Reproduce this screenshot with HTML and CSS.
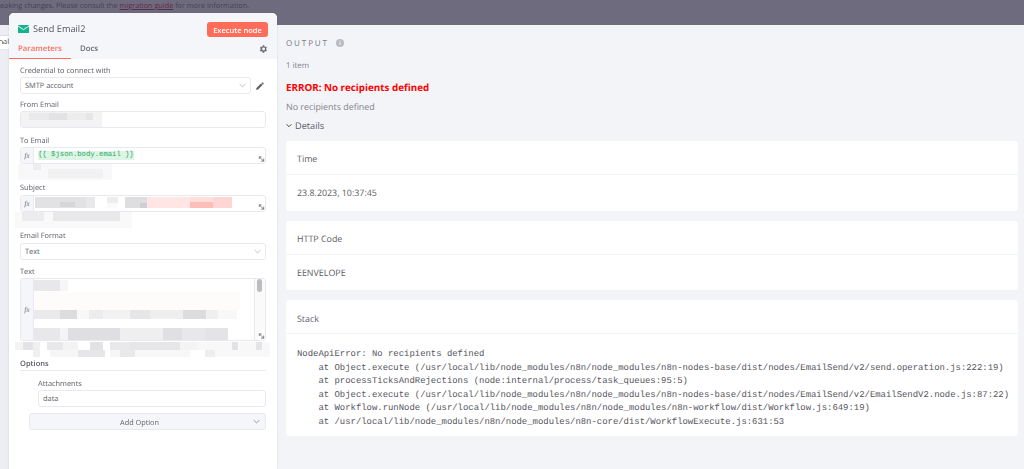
FILE: index.html
```html
<!DOCTYPE html>
<html lang="en">
<head>
<meta charset="utf-8">
<title>Send Email2</title>
<link rel="stylesheet" href="styles.css">
</head>
<body>
<div class="banner"><span class="banner-text">eaking changes. Please consult the <u class="banner-link">migration guide</u> for more information.</span></div>
<div class="stage">
  <div class="gutter"><span class="gutter-field">nal</span></div>
  <section class="panel">
    <header class="panel-head">
      <div class="title">
        <svg class="mail" viewBox="0 0 11 8" width="11" height="8"><rect width="11" height="8" rx=".6" fill="#17b28a"/><path d="M0 1l5.500 3.600L11 1" fill="none" stroke="#fff" stroke-width=".9"/></svg>
        <span>Send Email2</span>
      </div>
      <button class="exec">Execute node</button>
    </header>
    <nav class="tabs">
      <span class="tab tab-active">Parameters</span>
      <span class="tab">Docs</span>
      <svg class="gear" viewBox="0 0 24 24" width="10" height="10"><path fill="#6b6b74" d="M19.400 13a7.500 7.500 0 0 0 0-2l2.100-1.600-2-3.500-2.500 1a7.500 7.500 0 0 0-1.700-1L15.400 3.200h-4l-.4 2.700a7.500 7.500 0 0 0-1.700 1l-2.500-1-2 3.500L6.400 11a7.500 7.500 0 0 0 0 2l-2.100 1.600 2 3.500 2.500-1a7.500 7.500 0 0 0 1.700 1l.4 2.700h4l.4-2.700a7.500 7.500 0 0 0 1.700-1l2.500 1 2-3.500zM13.400 15.500a3.500 3.500 0 1 1 0-7 3.500 3.500 0 0 1 0 7z"/></svg>
    </nav>
    <div class="form">
      <label class="lbl">Credential to connect with</label>
      <div class="cred-row">
        <div class="input select grow">SMTP account<svg class="chev" viewBox="0 0 10 6" width="7" height="5"><path d="M1 1l4 4 4-4" fill="none" stroke="#a5a5ad" stroke-width="1"/></svg></div>
        <svg class="pencil" viewBox="0 0 24 24" width="10" height="10"><path fill="#5f5f68" d="M3 17.300V21h3.700L18 9.700 14.300 6zM20.700 7a1 1 0 0 0 0-1.400l-2.300-2.300a1 1 0 0 0-1.400 0l-1.700 1.700L19 8.700z"/></svg>
      </div>
      <label class="lbl">From Email</label>
      <div class="input masked"><i class="smear smear-from"></i></div>
      <label class="lbl lbl-to">To Email</label>
      <div class="input expr">
        <span class="fx">fx</span><span class="code"><span class="code-hl">{{ $json.body.email }}</span></span>
        <svg class="resize" viewBox="0 0 8 8" width="7" height="8"><path d="M1.500 1.500l5 5M6.500 3.500v3h-3M1.500 4V1.500H4" fill="none" stroke="#555" stroke-width=".8"/></svg>
      </div>
      <div class="under smear-to"></div>
      <label class="lbl lbl-subject">Subject</label>
      <div class="input expr">
        <span class="fx">fx</span><span class="code code-sub"><i class="smear smear-subject"></i></span>
        <svg class="resize" viewBox="0 0 8 8" width="7" height="8"><path d="M1.500 1.500l5 5M6.500 3.500v3h-3M1.500 4V1.500H4" fill="none" stroke="#555" stroke-width=".8"/></svg>
      </div>
      <div class="under smear-sub2"></div>
      <label class="lbl lbl-format">Email Format</label>
      <div class="input select">Text<svg class="chev" viewBox="0 0 10 6" width="7" height="5"><path d="M1 1l4 4 4-4" fill="none" stroke="#a5a5ad" stroke-width="1"/></svg></div>
      <label class="lbl lbl-text">Text</label>
      <div class="input expr expr-tall">
        <span class="fx">fx</span><span class="code-tall smear-text"></span>
        <div class="scroll"><i class="thumb"></i></div>
        <svg class="resize" viewBox="0 0 8 8" width="7" height="8"><path d="M1.500 1.500l5 5M6.500 3.500v3h-3M1.500 4V1.500H4" fill="none" stroke="#555" stroke-width=".8"/></svg>
      </div>
      <div class="under-text smear-text2"></div>
      <div class="options">Options</div>
      <div class="nested">
        <label class="lbl">Attachments</label>
        <div class="input">data</div>
      </div>
      <button class="add"><span class="add-label">Add Option</span><svg class="chev" viewBox="0 0 10 6" width="7" height="5"><path d="M1 1l4 4 4-4" fill="none" stroke="#6f6f78" stroke-width="1"/></svg></button>
    </div>
  </section>
  <main class="output">
    <div class="out-head">OUTPUT<span class="info">i</span></div>
    <div class="count">1 item</div>
    <div class="error">ERROR: No recipients defined</div>
    <div class="msg">No recipients defined</div>
    <div class="details"><svg viewBox="0 0 10 6" width="6" height="5"><path d="M1 1l4 4 4-4" fill="none" stroke="#444" stroke-width="1.600"/></svg>Details</div>
    <div class="card">
      <div class="card-head">Time</div>
      <div class="card-body">23.8.2023, 10:37:45</div>
    </div>
    <div class="card card-code">
      <div class="card-head">HTTP Code</div>
      <div class="card-body card-body-short">EENVELOPE</div>
    </div>
    <div class="card card-stack">
      <div class="card-head card-head-stack">Stack</div>
<pre class="stack">NodeApiError: No recipients defined
    at Object.execute (/usr/local/lib/node_modules/n8n/node_modules/n8n-nodes-base/dist/nodes/EmailSend/v2/send.operation.js:222:19)
    at processTicksAndRejections (node:internal/process/task_queues:95:5)
    at Object.execute (/usr/local/lib/node_modules/n8n/node_modules/n8n-nodes-base/dist/nodes/EmailSend/v2/EmailSendV2.node.js:87:22)
    at Workflow.runNode (/usr/local/lib/node_modules/n8n/node_modules/n8n-workflow/dist/Workflow.js:649:19)
    at /usr/local/lib/node_modules/n8n/node_modules/n8n-core/dist/WorkflowExecute.js:631:53</pre>
    </div>
  </main>
</div>
</body>
</html>
```

FILE: styles.css
```css
* { box-sizing: border-box; }
html, body { margin: 0; height: 469px; overflow: hidden; }
body { background: #f3f4f8; font-family: "Open Sans", sans-serif; font-size: 9px; color: #5d5d66; display: flex; flex-direction: column; filter: blur(.3px); text-rendering: geometricPrecision; }
.banner { height: 25px; flex: none; background: #6f6b7f; color: #45414f; font-size: 7.300px; line-height: 12px; white-space: nowrap; overflow: hidden; }
.banner-text { display: block; }
.banner-link { color: #5e2a45; }
.stage { flex: 1; display: flex; min-height: 0; }
.gutter { width: 9px; flex: none; background: #eceef3; padding-top: 10px; overflow: hidden; }
.gutter-field { display: block; width: 9px; height: 15px; background: #fff; border-top: 1px solid #dcdde3; border-bottom: 1px solid #e6e7ee; font-size: 7.300px; line-height: 12px; color: #444; white-space: nowrap; direction: rtl; overflow: hidden; }
.panel { width: 268px; flex: none; margin-top: -12px; background: #fff; border-radius: 5px 5px 0 0; box-shadow: 0 0 2px rgba(60,60,80,.2); display: flex; flex-direction: column; z-index: 2; position: relative; }
.panel-head { height: 25px; background: #f5f6fa; border-radius: 5px 5px 0 0; display: flex; align-items: flex-end; justify-content: space-between; padding: 0 9px 1px 9px; }
.title { display: flex; align-items: center; gap: 4px; font-size: 9.200px; line-height: 14px; color: #53535c; height: 15px; margin-bottom: 1px; }
.mail { display: block; }
.exec { width: 61px; height: 15px; border: 0; border-radius: 3px; background: #ff6d5a; color: #fff; font: 600 7.500px "Open Sans", sans-serif; padding: 0; }
.tabs { height: 21px; background: #f5f6fa; display: flex; align-items: stretch; padding: 0 9px 0 0; }
.tab { padding: 0 9px; line-height: 23px; font-size: 7.800px; font-weight: 600; color: #666670; }
.tab-active { color: #ff6d5a; border-bottom: 1px solid #ff6d5a; width: 62px; }
.gear { margin: 6px 0 0 auto; }
.form { padding: 6px 11px 0 11px; display: flex; flex-direction: column; }
.lbl { display: block; height: 12px; line-height: 12px; font-size: 7.400px; color: #5d5d66; }
.input { height: 17px; border: 1px solid #e8e9f0; border-radius: 3px; background: #fff; display: flex; align-items: center; padding: 0 4px; font-size: 7.400px; color: #5d5d66; position: relative; }
.select { justify-content: space-between; }
.cred-row { display: flex; align-items: center; gap: 4px; margin-bottom: 5px; }
.grow { flex: 1; }
.pencil { margin-right: 1px; }
.masked { padding: 0; overflow: hidden; }
.smear { display: block; }
.smear-from { width: 81px; height: 15px; background:
  linear-gradient(#eaeaec,#eaeaec) 8px 1px/20px 7px no-repeat,
  linear-gradient(#e2e2e4,#e2e2e4) 28px 1px/18px 7px no-repeat,
  linear-gradient(#ededee,#ededee) 46px 1px/19px 7px no-repeat,
  linear-gradient(#e6e6e8,#e6e6e8) 65px 1px/7px 7px no-repeat,
  #f3f3f4; }
.lbl-to { margin-top: 7px; }
.expr { padding: 0; }
.fx { width: 13px; align-self: stretch; background: #f5f6fa; border-right: 1px solid #e8e9f0; font: italic 7.500px "Liberation Serif", serif; color: #6d6d75; display: flex; align-items: center; justify-content: center; border-radius: 3px 0 0 3px; flex: none; }
.code { flex: 1; padding: 3px 0 0 4px; font: 7.270px/9px "Liberation Mono", monospace; color: #2fa765; align-self: stretch; display: flex; align-items: flex-start; }
.code-hl { background: #dcf5e5; }
.code-sub { padding: 1px 0 0 1px; }
.resize { position: absolute; right: 0; bottom: 0; background: #fff; }
.under { height: 16px; }
.smear-to { margin: 0 154px 0 -2px; background:
  linear-gradient(#ededee,#ededee) 15px 0/8px 6px no-repeat,
  linear-gradient(#f1f1f2,#f1f1f2) 30px 5px/55px 9px no-repeat,
  #f8f8f8; }
.lbl-subject { margin-top: 2px; margin-bottom: 1px; }
.smear-subject { width: 197px; height: 11px; background:
  linear-gradient(#d6d6d8,#d6d6d8) 25px 5px/15px 5px no-repeat,
  linear-gradient(#ededee,#ededee) 72px 0/11px 6px no-repeat,
  linear-gradient(#cfcfd1,#cfcfd1) 105px 6px/7px 5px no-repeat,
  linear-gradient(#ffbdb9,#ffbdb9) 155px 5px/23px 6px no-repeat,
  linear-gradient(90deg,#e2e2e4 0 51px,#e8e8ea 51px 60px,#fff 60px 72px,#fafafa 72px 83px,#fff 83px 90px,#dedee0 90px 112px,#ffe6e4 112px 155px,#ffdedc 155px 178px,#ffd6d4 178px 197px); }
.smear-sub2 { margin: 0 134px 0 -5px; background:
  linear-gradient(#ececee,#ececee) 7px 0/22px 9px no-repeat,
  linear-gradient(#e8e8ea,#e8e8ea) 38px 0/67px 9px no-repeat,
  #f9f9f9; }
.lbl-format { margin-top: 2px; margin-bottom: 1px; }
.lbl-text { margin-top: 6px; }
.expr-tall { height: 63px; overflow: hidden; }
.code-tall { flex: 1; align-self: stretch; }
.smear-text { background:
  linear-gradient(#e8e8ea,#e8e8ea) 0 1px/26px 11px no-repeat,
  linear-gradient(#f6f6f7,#f6f6f7) 26px 1px/8px 11px no-repeat,
  linear-gradient(90deg,#eaeaec 0 26px,#dcdcde 26px 43px,#f8f8f8 43px 55px,#ececee 55px 69px,#f2f2f3 69px 96px,#e6e6e8 96px 116px,#eeeeef 116px 149px,#dcdcde 149px 172px,#efeff0 172px 184px,#f8f8f8 184px 203px) 0 31px/203px 9px no-repeat,
  linear-gradient(90deg,#e8e8ea 0 26px,#f4f4f5 26px 34px,#dfdfe1 34px 86px,#efeff0 86px 129px,#e0e0e2 129px 148px,#e8e8ea 148px 171px,#e4e4e6 171px 194px) 0 49px/194px 12px no-repeat,
  linear-gradient(#fdfcfa,#fdfcfa) 1px 13px/205px 18px no-repeat,
  #fff; }
.scroll { width: 11px; align-self: stretch; background: #fafafa; border-left: 1px solid #e8e9f0; padding: 0 2px; flex: none; }
.thumb { display: block; width: 5px; height: 13px; border-radius: 3px; background: #bdbdc0; }
.under-text { height: 17px; margin: 0 -4px 0 -5px; background:
  linear-gradient(90deg,#f4f4f5 0 8px,#e4e4e6 8px 18px,#efefef 18px 25px,#fff 25px 32px,#e8e8ea 32px 48px,#f3f3f4 48px 63px,#fff 63px 75px,#e2e2e4 75px 88px,#fff 88px 95px,#e9e9eb 95px 115px,#e6e6e8 115px 165px,#f4f4f5 165px 183px,#f8f8f8 183px 217px,#e2e2e4 217px 223px,#f8f8f8 223px 241px,#e4e4e6 241px 247px,#f8f8f8 247px 255px) 0 1px/255px 8px no-repeat,
  linear-gradient(90deg,#fff 0 18px,#f0f0f0 18px 25px,#fff 25px 35px,#f6f6f6 35px 63px,#e6e6e8 63px 90px,#fff 90px 95px,#f6f6f6 95px 105px,#e9e9eb 105px 120px,#f7f7f7 120px 175px,#fff 175px 190px,#eee 190px 200px,#f8f8f8 200px 245px) 0 9px/255px 7px no-repeat; }
.options { height: 12px; margin-top: 1px; line-height: 11px; font-size: 7.500px; font-weight: 600; color: #55555e; border-bottom: 1px solid #e8e9f0; }
.nested { padding-left: 18px; margin-top: 7px; }
.add { margin: 6px 0 0 9px; height: 17px; border: 1px solid #e8e9f0; border-radius: 3px; background: #f5f6fa; color: #666670; font: 7.300px "Open Sans", sans-serif; display: flex; align-items: center; padding: 0 5px 0 0; }
.add-label { flex: 1; text-align: center; padding-right: 4px; }
.output { flex: 1; min-width: 0; padding: 12px 6px 0 9px; background: #f3f4f8; }
.out-head { font-size: 8px; letter-spacing: 1.900px; color: #77777f; display: flex; align-items: center; gap: 7px; height: 12px; }
.info { width: 8px; height: 8px; border-radius: 50%; background: #b9b9c0; color: #f3f4f8; font-size: 6px; font-weight: 700; line-height: 8px; text-align: center; letter-spacing: 0; }
.count { margin-top: 11px; font-size: 7.900px; color: #808088; height: 12px; line-height: 12px; }
.error { margin-top: 9px; font-size: 9.800px; font-weight: 700; color: #ff0000; height: 14px; line-height: 14px; }
.msg { margin-top: 5px; font-size: 8.900px; color: #808088; height: 13px; line-height: 13px; }
.details { margin-top: 6px; display: flex; align-items: center; gap: 3px; font-size: 9.200px; color: #5d5d66; height: 13px; }
.card { background: #fff; border-radius: 3px; margin-top: 9px; }
.card-code { margin-top: 10px; }
.card-stack { margin-top: 10px; }
.card-head { height: 34px; padding: 0 11px; line-height: 36px; font-size: 8.900px; color: #5d5d66; border-bottom: 1px solid #f3f4f8; }
.card-head-stack { line-height: 37px; }
.card-body { height: 36px; padding: 0 11px; line-height: 35px; font-size: 8.900px; color: #5d5d66; }
.card-body-short { height: 35px; }
.stack { margin: 0; padding: 14px 11px 7px; font: 8.940px/13.500px "Liberation Mono", monospace; color: #55555e; white-space: pre; overflow: hidden; }
```
